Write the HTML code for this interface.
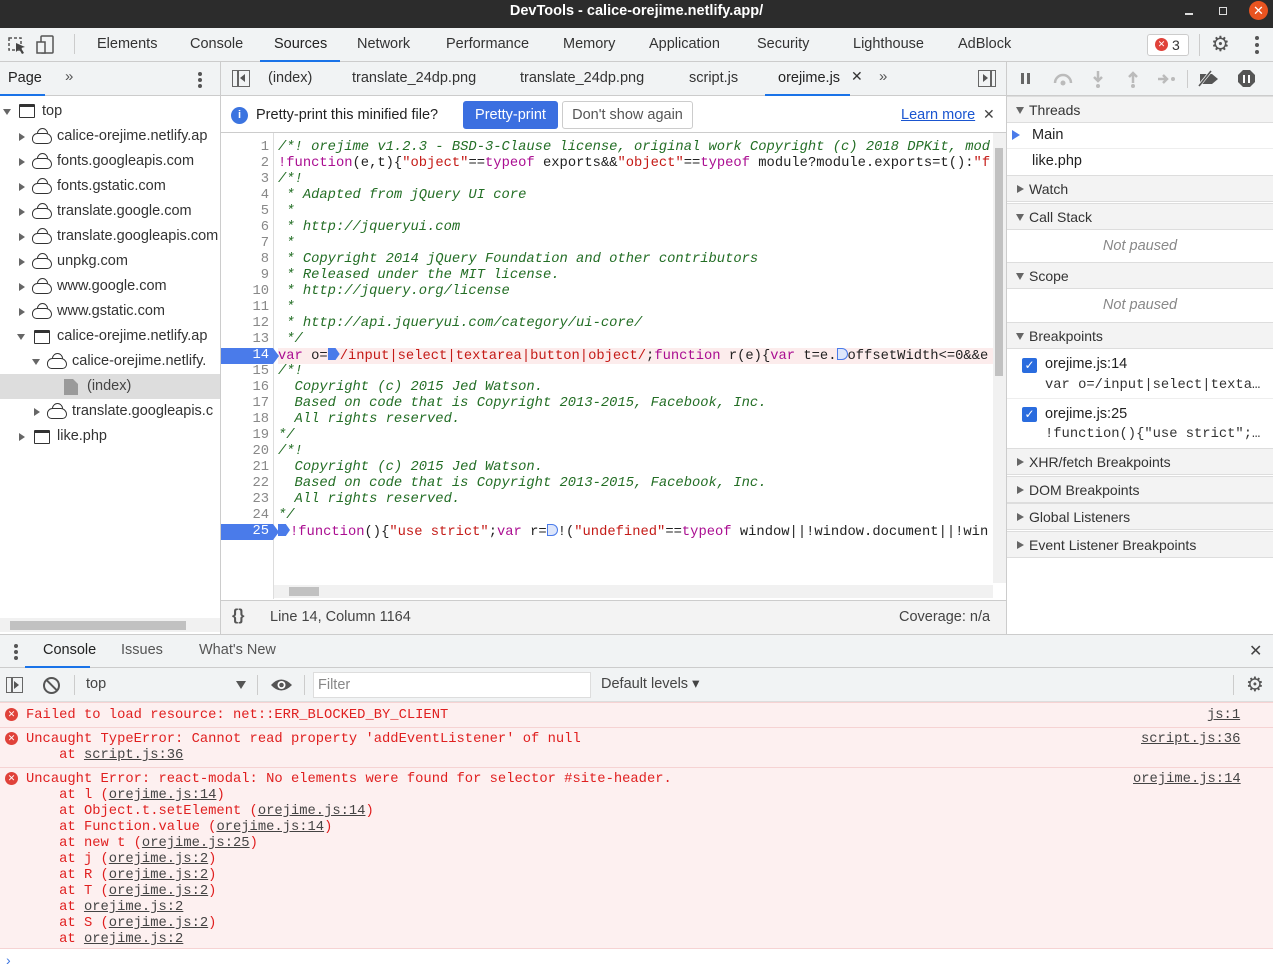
<!DOCTYPE html>
<html><head><meta charset="utf-8"><style>
*{box-sizing:border-box;margin:0;padding:0}
body{width:1273px;height:968px;overflow:hidden;font-family:"Liberation Sans","DejaVu Sans",sans-serif;font-size:14px;color:#333;background:#fff;position:relative}
.a{position:absolute;white-space:nowrap}
.mono{font-family:"Liberation Mono","DejaVu Sans Mono",monospace;font-size:13.8px}
.c{color:#236e25;font-style:italic}
.k{color:#aa0d91}
.s{color:#c41a16}
.g{color:#555}
.hdr{position:absolute;left:1007px;width:266px;height:27px;background:#f3f3f3;border-top:1px solid #ddd;border-bottom:1px solid #ddd;font-size:14px;color:#333;padding-left:22px;line-height:26px}
.hdr:before{content:"";position:absolute;left:9px;top:10px;border-left:4px solid transparent;border-right:4px solid transparent;border-top:7px solid #666}
.hdr.cl:before{left:10px;top:9px;border-top:4px solid transparent;border-bottom:4px solid transparent;border-left:7px solid #666;border-right:0}
.tri{position:absolute;width:0;height:0}
.trir{border-top:4px solid transparent;border-bottom:4px solid transparent;border-left:6px solid #666}
.trid{border-left:4px solid transparent;border-right:4px solid transparent;border-top:6px solid #666}
.cloud{position:absolute;width:20px;height:11px;border:1.6px solid #333;border-radius:6px 7px 5px 5px}
.cloud:before{content:"";position:absolute;left:4px;top:-6px;width:9px;height:9px;border:1.6px solid #333;border-bottom-color:transparent;border-right-color:transparent;border-radius:50%;transform:rotate(45deg);background:transparent}
.frame{position:absolute;width:16px;height:14px;border:1.6px solid #333;border-top-width:3px;border-radius:1px}
.err{position:absolute;width:13px;height:13px;border-radius:50%;background:#e0423a;color:#fff;font-size:9px;line-height:13px;text-align:center;font-weight:bold}
.row{position:absolute;left:0;width:1273px;background:#fdf0f0;border-top:1px solid #f6d3d3}
.u{text-decoration:underline;color:#444}
.pre{white-space:pre}
</style></head><body>
<div class="a" style="left:0;top:0;width:1273px;height:28px;background:#2c2c2c"></div>
<div class="a" style="left:0;top:3px;width:1273px;text-align:center;color:#fff;font-weight:bold;font-size:14.5px">DevTools - calice-orejime.netlify.app/</div>
<div class="a" style="left:1185px;top:13px;width:8px;height:1.5px;background:#ddd"></div>
<div class="a" style="left:1219px;top:7px;width:8px;height:8px;border:1.3px solid #ddd"></div>
<div class="a" style="left:1249px;top:1px;width:19px;height:19px;border-radius:50%;background:#e95420;color:#fff;text-align:center;font-size:13px;line-height:19px">✕</div>
<div class="a" style="left:0;top:28px;width:1273px;height:34px;background:#f1f3f4;border-bottom:1px solid #ccc"></div>
<svg class="a" style="left:7px;top:35px" width="60" height="20"><rect x="2" y="3" width="12" height="12" fill="none" stroke="#555" stroke-width="1.5" stroke-dasharray="3 2"/><path d="M9 8 L18 12 L14 13 L17 18 L15 19 L12 14 L9 17Z" fill="#444"/><rect x="34" y="1" width="12" height="17" fill="none" stroke="#555" stroke-width="1.5" rx="1"/><rect x="30" y="7" width="8" height="11" fill="#f1f3f4" stroke="#555" stroke-width="1.5"/></svg>
<div class="a" style="left:74px;top:34px;width:1px;height:20px;background:#ccc"></div>
<div class="a" style="top:36px;left:97px;font-size:14.5px;color:#333">Elements</div>
<div class="a" style="top:36px;left:190px;font-size:14.5px;color:#333">Console</div>
<div class="a" style="top:36px;left:274px;font-size:14.5px;color:#222">Sources</div>
<div class="a" style="left:260px;top:60px;width:80px;height:2px;background:#1a73e8"></div>
<div class="a" style="top:36px;left:357px;font-size:14.5px">Network</div>
<div class="a" style="top:36px;left:446px;font-size:14.5px">Performance</div>
<div class="a" style="top:36px;left:563px;font-size:14.5px">Memory</div>
<div class="a" style="top:36px;left:649px;font-size:14.5px">Application</div>
<div class="a" style="top:36px;left:757px;font-size:14.5px">Security</div>
<div class="a" style="top:36px;left:853px;font-size:14.5px">Lighthouse</div>
<div class="a" style="top:36px;left:958px;font-size:14.5px">AdBlock</div>
<div class="a" style="left:1147px;top:34px;width:42px;height:22px;border:1px solid #ccc;border-radius:3px;background:#fff"></div>
<div class="err" style="left:1155px;top:38px">✕</div>
<div class="a" style="left:1172px;top:37px;font-size:14px">3</div>
<div class="a" style="left:1199px;top:34px;width:1px;height:22px;background:#ccc"></div>
<div class="a" style="left:1211px;top:32px;font-size:21px;color:#555">⚙</div>
<div class="a" style="left:1255px;top:36px;width:4px;height:4px;border-radius:50%;background:#555;box-shadow:0 7px 0 #555,0 14px 0 #555"></div>
<div class="a" style="left:0;top:62px;width:220px;height:34px;background:#f1f3f4;border-bottom:1px solid #ccc"></div>
<div class="a" style="left:8px;top:70px;font-size:14.5px;color:#222">Page</div>
<div class="a" style="left:0;top:94px;width:45px;height:2px;background:#1a73e8"></div>
<div class="a" style="left:65px;top:68px;font-size:15px;color:#555">»</div>
<div class="a" style="left:198px;top:72px;width:4px;height:4px;border-radius:50%;background:#555;box-shadow:0 6px 0 #555,0 12px 0 #555"></div>
<div class="a" style="left:220px;top:62px;width:1px;height:572px;background:#ccc"></div>
<div class="tri trid" style="left:3px;top:109px"></div><div class="frame" style="left:19px;top:104px"></div><div class="a" style="left:42px;top:103px;font-size:14.5px">top</div>
<div id="tree"></div>
<div class="a" style="left:0;top:374px;width:220px;height:25px;background:#ddd"></div>
<svg class="a" style="left:63px;top:378px" width="16" height="18"><path d="M1 1h9l5 5v11H1z" fill="#9a9a9a"/></svg>
<div class="a" style="left:87px;top:378px;font-size:14.5px;color:#444">(index)</div>
<div class="a" style="left:0;top:618px;width:220px;height:14px;background:#f1f1f1"></div>
<div class="a" style="left:10px;top:621px;width:176px;height:9px;background:#c1c1c1"></div>
<div class="a" style="left:221px;top:62px;width:785px;height:34px;background:#f1f3f4;border-bottom:1px solid #ccc"></div>
<div class="a" style="left:232px;top:70px;width:18px;height:17px;border:1.5px solid #666"></div><div class="a" style="left:237px;top:71px;width:1.5px;height:15px;background:#666"></div><div class="tri" style="left:240px;top:74px;border-top:4px solid transparent;border-bottom:4px solid transparent;border-right:5px solid #555"></div>
<div class="a" style="left:268px;top:70px;font-size:14.5px">(index)</div>
<div class="a" style="left:352px;top:70px;font-size:14.5px">translate_24dp.png</div>
<div class="a" style="left:520px;top:70px;font-size:14.5px">translate_24dp.png</div>
<div class="a" style="left:689px;top:70px;font-size:14.5px">script.js</div>
<div class="a" style="left:778px;top:70px;font-size:14.5px;color:#222">orejime.js</div>
<div class="a" style="left:851px;top:68px;font-size:14px">✕</div>
<div class="a" style="left:765px;top:94px;width:85px;height:2px;background:#1a73e8"></div>
<div class="a" style="left:879px;top:68px;font-size:15px;color:#555">»</div>
<div class="a" style="left:978px;top:70px;width:18px;height:17px;border:1.5px solid #666"></div><div class="a" style="left:990px;top:71px;width:1.5px;height:15px;background:#666"></div><div class="tri" style="left:983px;top:74px;border-top:4px solid transparent;border-bottom:4px solid transparent;border-left:5px solid #555"></div>
<div class="a" style="left:221px;top:96px;width:785px;height:37px;background:#fff;border-bottom:1px solid #ccc"></div>
<div class="a" style="left:231px;top:107px;width:17px;height:17px;border-radius:50%;background:#3b74e0;color:#fff;font-size:11px;text-align:center;line-height:17px;font-weight:bold">i</div>
<div class="a" style="left:256px;top:107px;font-size:14.5px;color:#222">Pretty-print this minified file?</div>
<div class="a" style="left:463px;top:101px;width:95px;height:28px;background:#3b6fe0;border-radius:3px;color:#fff;font-size:14.5px;text-align:center;line-height:28px">Pretty-print</div>
<div class="a" style="left:562px;top:101px;width:131px;height:28px;border:1px solid #ccc;border-radius:3px;font-size:14.5px;text-align:center;line-height:26px;color:#555">Don't show again</div>
<div class="a" style="left:901px;top:107px;font-size:14.5px;color:#1a55d0;text-decoration:underline">Learn more</div>
<div class="a" style="left:983px;top:106px;font-size:14px;color:#444">✕</div>
<div class="a" style="left:273px;top:133px;width:1px;height:466px;background:#ddd"></div>
<div class="a" style="left:278px;top:348px;width:715px;height:16px;background:#fcecec"></div>
<div id="code" class="a mono" style="left:221px;top:140px;line-height:16px"></div>
<div class="a" style="left:993px;top:133px;width:13px;height:450px;background:#f1f1f1"></div>
<div class="a" style="left:995px;top:148px;width:8px;height:228px;background:#c1c1c1"></div>
<div class="a" style="left:274px;top:585px;width:719px;height:13px;background:#f1f1f1"></div>
<div class="a" style="left:289px;top:587px;width:30px;height:9px;background:#c1c1c1"></div>
<div class="a" style="left:221px;top:600px;width:785px;height:34px;background:#f3f3f3;border-top:1px solid #ccc"></div>
<div class="a" style="left:232px;top:607px;font-size:16px;color:#555;font-weight:bold">{}</div>
<div class="a" style="left:270px;top:609px;font-size:14.5px;color:#444">Line 14, Column 1164</div>
<div class="a" style="left:899px;top:609px;font-size:14.5px;color:#444">Coverage: n/a</div>
<div class="a" style="left:1006px;top:62px;width:1px;height:572px;background:#ccc"></div>
<div class="a" style="left:1007px;top:62px;width:266px;height:34px;background:#f1f3f4;border-bottom:1px solid #ccc"></div>
<svg class="a" style="left:1015px;top:68px" width="250" height="22"><rect x="6" y="5" width="3" height="11" fill="#666"/><rect x="12" y="5" width="3" height="11" fill="#666"/><path d="M40 15a8 8 0 0 1 16 0" fill="none" stroke="#bbb" stroke-width="2.5"/><circle cx="48" cy="15" r="2.5" fill="#bbb"/><path d="M83 3v9M79 9l4 4 4-4" fill="none" stroke="#bbb" stroke-width="2.5"/><circle cx="83" cy="18" r="2" fill="#bbb"/><path d="M118 15V5M114 9l4-4 4 4" fill="none" stroke="#bbb" stroke-width="2.5"/><circle cx="118" cy="18" r="2" fill="#bbb"/><path d="M143 11h8M148 7l4 4-4 4" fill="none" stroke="#bbb" stroke-width="2.5"/><circle cx="158" cy="11" r="2" fill="#bbb"/><rect x="172" y="2" width="1" height="18" fill="#ccc"/><path d="M185 6h12l6 5-6 5h-12z" fill="#555"/><path d="M183 19l13-16" stroke="#f1f3f4" stroke-width="3"/><path d="M184 18l12-15" stroke="#555" stroke-width="1.6"/><path d="M228 2l7 0 5 5v7l-5 5h-7l-5-5V7z" fill="#555"/><rect x="228" y="7" width="2" height="8" fill="#fff"/><rect x="233" y="7" width="2" height="8" fill="#fff"/></svg>
<div class="hdr" style="top:96px">Threads</div>
<div class="tri" style="left:1012px;top:130px;border-top:5px solid transparent;border-bottom:5px solid transparent;border-left:8px solid #4a7bea"></div>
<div class="a" style="left:1032px;top:127px;font-size:14.5px;color:#222">Main</div>
<div class="a" style="left:1007px;top:148px;width:266px;height:1px;background:#eee"></div>
<div class="a" style="left:1032px;top:153px;font-size:14.5px;color:#222">like.php</div>
<div class="hdr cl" style="top:175px">Watch</div>
<div class="hdr" style="top:203px">Call Stack</div>
<div class="a" style="left:1007px;top:238px;width:266px;text-align:center;font-style:italic;color:#888;font-size:14.5px">Not paused</div>
<div class="hdr" style="top:262px">Scope</div>
<div class="a" style="left:1007px;top:297px;width:266px;text-align:center;font-style:italic;color:#888;font-size:14.5px">Not paused</div>
<div class="hdr" style="top:322px">Breakpoints</div>
<div class="a" style="left:1022px;top:358px;width:15px;height:15px;background:#2a6cde;border-radius:2px;color:#fff;font-size:12px;text-align:center;line-height:15px">✓</div>
<div class="a" style="left:1045px;top:356px;font-size:14.5px;color:#222">orejime.js:14</div>
<div class="a mono" style="left:1045px;top:378px;color:#333">var o=/input|select|texta…</div>
<div class="a" style="left:1007px;top:398px;width:266px;height:1px;background:#eee"></div>
<div class="a" style="left:1022px;top:407px;width:15px;height:15px;background:#2a6cde;border-radius:2px;color:#fff;font-size:12px;text-align:center;line-height:15px">✓</div>
<div class="a" style="left:1045px;top:406px;font-size:14.5px;color:#222">orejime.js:25</div>
<div class="a mono" style="left:1045px;top:427px;color:#333">!function(){"use strict";…</div>
<div class="hdr cl" style="top:448px">XHR/fetch Breakpoints</div>
<div class="hdr cl" style="top:476px">DOM Breakpoints</div>
<div class="hdr cl" style="top:503px">Global Listeners</div>
<div class="hdr cl" style="top:531px">Event Listener Breakpoints</div>
<div class="a" style="left:0;top:634px;width:1273px;height:34px;background:#f1f3f4;border-top:1px solid #ccc;border-bottom:1px solid #ccc"></div>
<div class="a" style="left:14px;top:644px;width:4px;height:4px;border-radius:50%;background:#555;box-shadow:0 6px 0 #555,0 12px 0 #555"></div>
<div class="a" style="left:43px;top:642px;font-size:14.5px;color:#222">Console</div>
<div class="a" style="left:25px;top:666px;width:65px;height:2px;background:#1a73e8"></div>
<div class="a" style="left:121px;top:642px;font-size:14.5px;color:#555">Issues</div>
<div class="a" style="left:199px;top:642px;font-size:14.5px;color:#555">What's New</div>
<div class="a" style="left:1249px;top:641px;font-size:16px;color:#444">✕</div>
<div class="a" style="left:0;top:668px;width:1273px;height:34px;background:#f1f3f4;border-bottom:1px solid #ddd"></div>
<div class="a" style="left:6px;top:677px;width:17px;height:16px;border:1.5px solid #666"></div><div class="a" style="left:11px;top:678px;width:1.5px;height:14px;background:#666"></div><div class="tri" style="left:14px;top:681px;border-top:4px solid transparent;border-bottom:4px solid transparent;border-left:5px solid #555"></div>
<div class="a" style="left:43px;top:677px;width:17px;height:17px;border:2px solid #555;border-radius:50%"></div><div class="a" style="left:44px;top:684px;width:15px;height:2px;background:#555;transform:rotate(45deg)"></div>
<div class="a" style="left:74px;top:675px;width:1px;height:20px;background:#ccc"></div>
<div class="a" style="left:86px;top:676px;font-size:14.5px;color:#444">top</div>
<div class="tri" style="left:236px;top:681px;border-left:5px solid transparent;border-right:5px solid transparent;border-top:8px solid #555"></div>
<div class="a" style="left:257px;top:675px;width:1px;height:20px;background:#ccc"></div>
<svg class="a" style="left:270px;top:677px" width="24" height="16"><path d="M1 8Q11-3 22 8Q11 19 1 8z" fill="#555"/><circle cx="11.5" cy="8" r="4" fill="#fff"/><circle cx="11.5" cy="8" r="2.3" fill="#555"/></svg>
<div class="a" style="left:304px;top:675px;width:1px;height:20px;background:#ccc"></div>
<div class="a" style="left:313px;top:672px;width:278px;height:26px;background:#fff;border:1px solid #ddd"></div>
<div class="a" style="left:318px;top:677px;font-size:14.5px;color:#888">Filter</div>
<div class="a" style="left:601px;top:676px;font-size:14.5px;color:#444">Default levels ▾</div>
<div class="a" style="left:1233px;top:675px;width:1px;height:20px;background:#ccc"></div>
<div class="a" style="left:1246px;top:672px;font-size:20px;color:#555">⚙</div>
<div class="row" style="top:702px;height:25px"></div>
<div class="row" style="top:727px;height:40px"></div>
<div class="row" style="top:767px;height:181px"></div>
<div class="a" style="left:0;top:948px;width:1273px;height:1px;background:#f6d3d3"></div>
<div class="err" style="left:5px;top:708px">✕</div>
<div class="err" style="left:5px;top:732px">✕</div>
<div class="err" style="left:5px;top:772px">✕</div>
<div class="a mono pre" style="left:26px;top:708px;line-height:16px;color:#e01f1f">Failed to load resource: net::ERR_BLOCKED_BY_CLIENT</div>
<div class="a mono u" style="left:1207px;top:708px;line-height:16px">js:1</div>
<div class="a mono pre" style="left:26px;top:732px;line-height:16px;color:#e01f1f">Uncaught TypeError: Cannot read property 'addEventListener' of null
    at <span class="u">script.js:36</span></div>
<div class="a mono u" style="left:1141px;top:732px;line-height:16px">script.js:36</div>
<div class="a mono pre" style="left:26px;top:772px;line-height:16px;color:#e01f1f">Uncaught Error: react-modal: No elements were found for selector #site-header.
    at l (<span class="u">orejime.js:14</span>)
    at Object.t.setElement (<span class="u">orejime.js:14</span>)
    at Function.value (<span class="u">orejime.js:14</span>)
    at new t (<span class="u">orejime.js:25</span>)
    at j (<span class="u">orejime.js:2</span>)
    at R (<span class="u">orejime.js:2</span>)
    at T (<span class="u">orejime.js:2</span>)
    at <span class="u">orejime.js:2</span>
    at S (<span class="u">orejime.js:2</span>)
    at <span class="u">orejime.js:2</span></div>
<div class="a mono u" style="left:1133px;top:772px;line-height:16px">orejime.js:14</div>
<div class="a" style="left:6px;top:952px;color:#3b74e0;font-size:14px">›</div>
<script>
var tr=[[112,1,'top',0],[137,2,'calice-orejime.netlify.ap'],[162,2,'fonts.googleapis.com'],[187,2,'fonts.gstatic.com'],[212,2,'translate.google.com'],[237,2,'translate.googleapis.com'],[262,2,'unpkg.com'],[287,2,'www.google.com'],[312,2,'www.gstatic.com'],[337,3,'calice-orejime.netlify.ap'],[362,4,'calice-orejime.netlify.'],[412,5,'translate.googleapis.c'],[437,6,'like.php']];
var h='';
tr.slice(1).forEach(function(t){var y=t[0],k=t[1],n=t[2];
 if(k==2){h+='<div class="tri trir" style="left:19px;top:'+(y-4)+'px"></div><div class="cloud" style="left:32px;top:'+(y-4)+'px"></div><div class="a" style="left:57px;top:'+(y-9)+'px;font-size:14.5px;width:163px;overflow:hidden">'+n+'</div>';}
 if(k==3){h+='<div class="tri trid" style="left:17px;top:'+(y-3)+'px"></div><div class="frame" style="left:34px;top:'+(y-7)+'px"></div><div class="a" style="left:57px;top:'+(y-9)+'px;font-size:14.5px;width:163px;overflow:hidden">'+n+'</div>';}
 if(k==4){h+='<div class="tri trid" style="left:32px;top:'+(y-3)+'px"></div><div class="cloud" style="left:47px;top:'+(y-4)+'px"></div><div class="a" style="left:72px;top:'+(y-9)+'px;font-size:14.5px;width:148px;overflow:hidden">'+n+'</div>';}
 if(k==5){h+='<div class="tri trir" style="left:34px;top:'+(y-4)+'px"></div><div class="cloud" style="left:47px;top:'+(y-4)+'px"></div><div class="a" style="left:72px;top:'+(y-9)+'px;font-size:14.5px;width:148px;overflow:hidden">'+n+'</div>';}
 if(k==6){h+='<div class="tri trir" style="left:19px;top:'+(y-4)+'px"></div><div class="frame" style="left:34px;top:'+(y-7)+'px"></div><div class="a" style="left:57px;top:'+(y-9)+'px;font-size:14.5px">'+n+'</div>';}
});
document.getElementById('tree').innerHTML=h;
var L=[
'<span class="c">/*! orejime v1.2.3 - BSD-3-Clause license, original work Copyright (c) 2018 DPKit, mod</span>',
'<span class="k">!function</span>(e,t){<span class="s">"object"</span>==<span class="k">typeof</span> exports&amp;&amp;<span class="s">"object"</span>==<span class="k">typeof</span> module?module.exports=t():<span class="s">"f</span>',
'<span class="c">/*!</span>','<span class="c"> * Adapted from jQuery UI core</span>','<span class="c"> *</span>','<span class="c"> * http://jqueryui.com</span>','<span class="c"> *</span>',
'<span class="c"> * Copyright 2014 jQuery Foundation and other contributors</span>','<span class="c"> * Released under the MIT license.</span>','<span class="c"> * http://jquery.org/license</span>','<span class="c"> *</span>','<span class="c"> * http://api.jqueryui.com/category/ui-core/</span>','<span class="c"> */</span>',
'<span class="k">var</span> o=<span style="display:inline-block;width:12px;height:12px;background:#4a7bea;clip-path:polygon(0 0,65% 0,100% 50%,65% 100%,0 100%);vertical-align:-1px"></span><span class="s">/input|select|textarea|button|object/</span>;<span class="k">function</span> r(e){<span class="k">var</span> t=e.<span style="display:inline-block;width:11px;height:12px;border:1px solid #4a7bea;background:#dde6fb;border-radius:0 6px 6px 0;vertical-align:-1px"></span>offsetWidth&lt;=0&amp;&amp;e',
'<span class="c">/*!</span>','<span class="c">  Copyright (c) 2015 Jed Watson.</span>','<span class="c">  Based on code that is Copyright 2013-2015, Facebook, Inc.</span>','<span class="c">  All rights reserved.</span>','<span class="c">*/</span>',
'<span class="c">/*!</span>','<span class="c">  Copyright (c) 2015 Jed Watson.</span>','<span class="c">  Based on code that is Copyright 2013-2015, Facebook, Inc.</span>','<span class="c">  All rights reserved.</span>','<span class="c">*/</span>',
'<span style="display:inline-block;width:12px;height:12px;background:#4a7bea;clip-path:polygon(0 0,65% 0,100% 50%,65% 100%,0 100%);vertical-align:-1px"></span><span class="k">!function</span>(){<span class="s">"use strict"</span>;<span class="k">var</span> r=<span style="display:inline-block;width:11px;height:12px;border:1px solid #4a7bea;background:#dde6fb;border-radius:0 6px 6px 0;vertical-align:-1px"></span>!(<span class="s">"undefined"</span>==<span class="k">typeof</span> window||!window.document||!win'];
var c='';
L.forEach(function(l,i){var n=i+1,bp=(n==14||n==25);
c+='<div style="position:relative;height:16px;width:772px;overflow:hidden">'+(bp?'<div style="position:absolute;left:0;top:0;width:58px;height:16px;background:#4a7bea;clip-path:polygon(0 0,52px 0,58px 50%,52px 100%,0 100%)"></div>':'')+'<div style="position:absolute;left:0;width:48px;text-align:right;color:'+(bp?'#fff':'#888')+'">'+n+'</div><div style="position:absolute;left:57px;white-space:pre;color:#222">'+l+'</div></div>';});
document.getElementById('code').innerHTML=c;
</script>
</body></html>
